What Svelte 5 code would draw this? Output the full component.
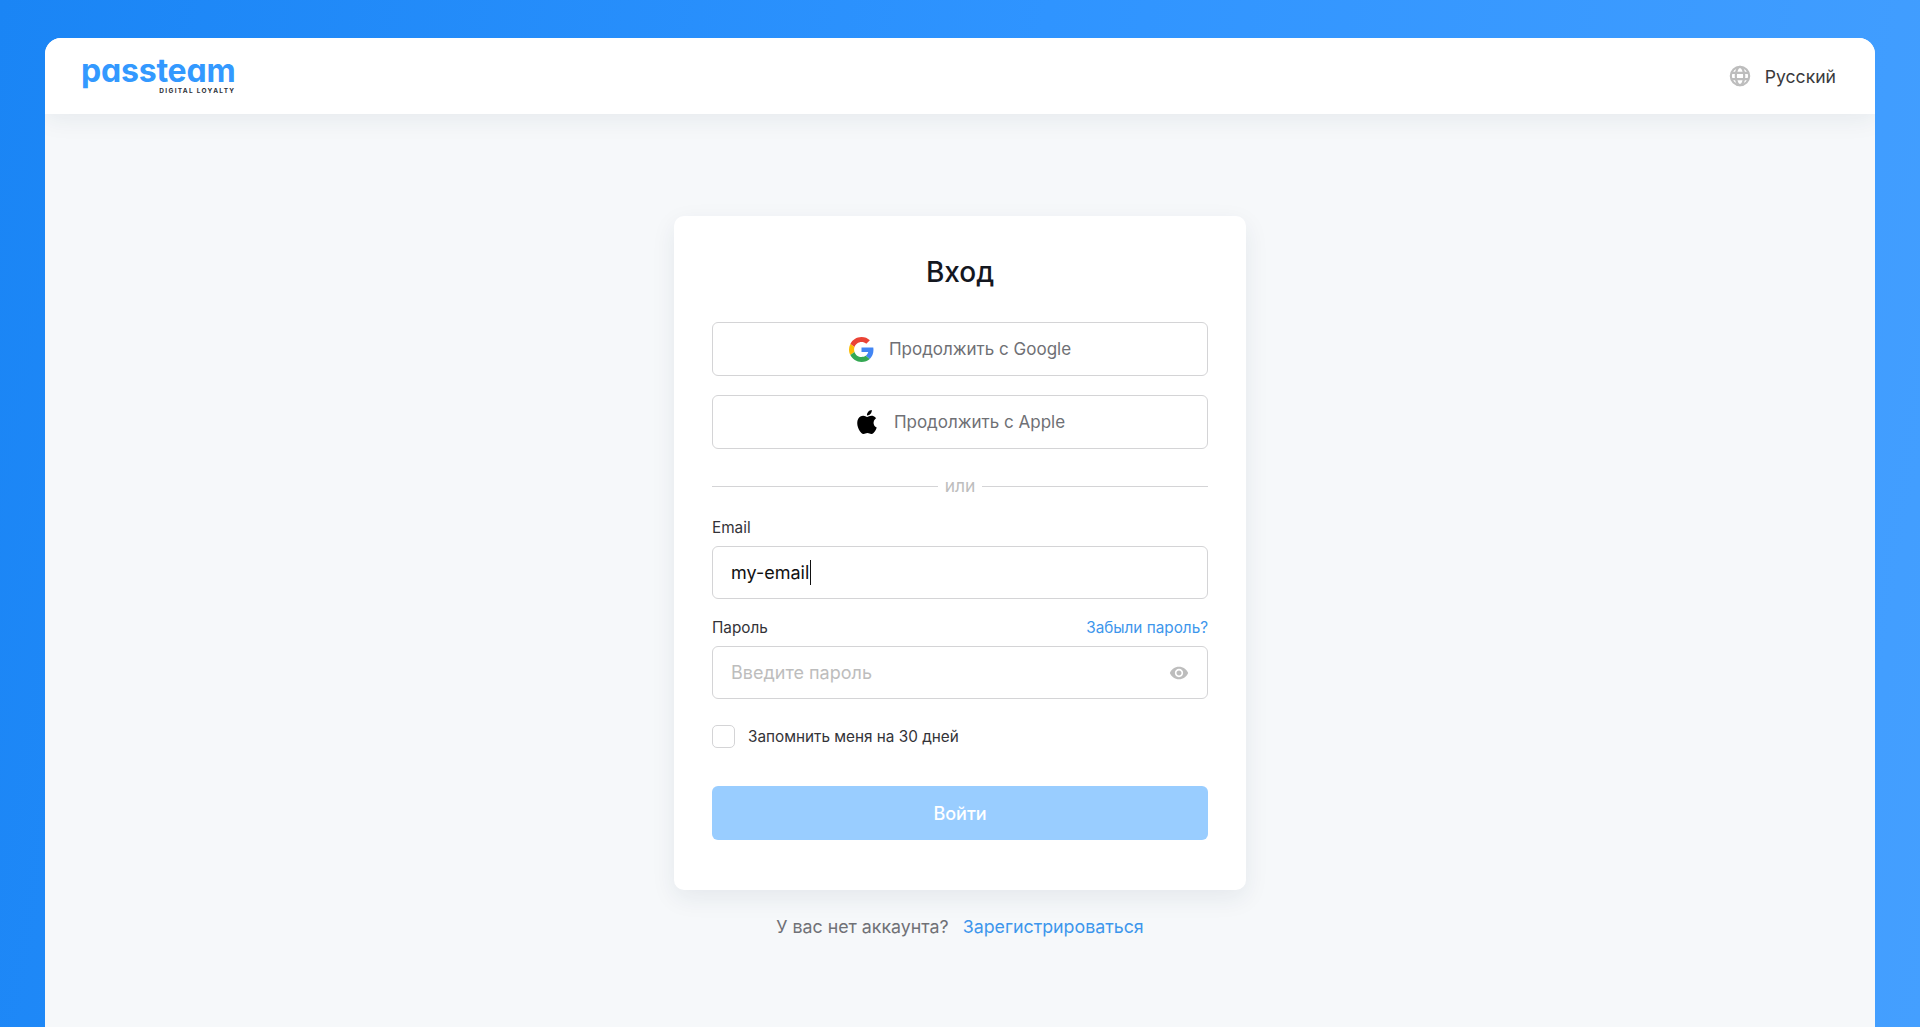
<script>
  let email = 'my-email';
</script>

<div class="shell">
  <header class="topbar">
    <div class="logo">
      <span class="logo-word">passteam</span>
      <span class="logo-tag">DIGITAL LOYALTY</span>
    </div>
    <div class="lang">
      <svg class="globe" viewBox="0 0 24 24" fill="none" stroke="#bdbdbd" stroke-width="2.4">
        <circle cx="12" cy="12" r="10" />
        <ellipse cx="12" cy="12" rx="4.6" ry="10" />
        <path d="M2.6 8.6h18.8M2.6 15.4h18.8" />
      </svg>
      <span>Русский</span>
    </div>
  </header>

  <main class="page">
    <section class="card">
      <h1>Вход</h1>

      <button class="oauth" type="button">
        <svg class="g-icon" viewBox="0 0 48 48">
          <path fill="#EA4335" d="M24 9.5c3.54 0 6.71 1.22 9.21 3.6l6.85-6.85C35.9 2.38 30.47 0 24 0 14.62 0 6.51 5.38 2.56 13.22l7.98 6.19C12.43 13.72 17.74 9.5 24 9.5z" />
          <path fill="#4285F4" d="M46.98 24.55c0-1.57-.15-3.09-.38-4.55H24v9.02h12.94c-.58 2.96-2.26 5.48-4.78 7.18l7.73 6c4.51-4.18 7.09-10.36 7.09-17.65z" />
          <path fill="#FBBC05" d="M10.53 28.59c-.48-1.45-.76-2.99-.76-4.59s.27-3.14.76-4.59l-7.98-6.19C.92 16.46 0 20.12 0 24c0 3.88.92 7.54 2.56 10.78l7.97-6.19z" />
          <path fill="#34A853" d="M24 48c6.48 0 11.93-2.13 15.89-5.81l-7.73-6c-2.15 1.45-4.92 2.3-8.16 2.3-6.26 0-11.57-4.22-13.47-9.91l-7.98 6.19C6.51 42.62 14.62 48 24 48z" />
        </svg>
        <span>Продолжить с Google</span>
      </button>

      <button class="oauth" type="button">
        <svg class="apple-icon" viewBox="0 0 24 24">
          <path fill="#000" d="M12.152 6.896c-.948 0-2.415-1.078-3.96-1.04-2.04.027-3.91 1.183-4.961 3.014-2.117 3.675-.546 9.103 1.519 12.09 1.013 1.454 2.208 3.09 3.792 3.039 1.52-.065 2.09-.987 3.935-.987 1.831 0 2.35.987 3.96.948 1.637-.026 2.676-1.48 3.676-2.948 1.156-1.688 1.636-3.325 1.662-3.415-.039-.013-3.182-1.221-3.22-4.857-.026-3.04 2.48-4.494 2.597-4.559-1.429-2.09-3.623-2.324-4.39-2.376-2-.156-3.675 1.09-4.61 1.09zM15.53 3.83c.843-1.012 1.4-2.427 1.245-3.83-1.207.052-2.662.805-3.532 1.818-.78.896-1.454 2.338-1.273 3.714 1.338.104 2.715-.688 3.559-1.701" />
        </svg>
        <span>Продолжить с Apple</span>
      </button>

      <div class="divider"><span>или</span></div>

      <div class="field first">
        <div class="field-head"><label for="email">Email</label></div>
        <div class="input-box">
          <span class="typed" id="email">{email}</span>
        </div>
      </div>

      <div class="field">
        <div class="field-head">
          <label for="password">Пароль</label>
          <a href="#forgot" class="link small">Забыли пароль?</a>
        </div>
        <div class="input-box">
          <input id="password" type="password" placeholder="Введите пароль" />
          <svg class="eye" viewBox="0 0 24 24">
            <path fill="#bdbdbd" d="M12 4.5C7 4.5 2.73 7.61 1 12c1.73 4.39 6 7.5 11 7.5s9.27-3.11 11-7.5c-1.73-4.39-6-7.5-11-7.5zM12 17c-2.76 0-5-2.24-5-5s2.24-5 5-5 5 2.24 5 5-2.24 5-5 5zm0-8c-1.66 0-3 1.34-3 3s1.34 3 3 3 3-1.34 3-3-1.34-3-3-3z" />
          </svg>
        </div>
      </div>

      <label class="remember">
        <span class="check"></span>
        <span>Запомнить меня на 30 дней</span>
      </label>

      <button class="submit" type="button">Войти</button>
    </section>

    <p class="signup">
      <span>У вас нет аккаунта?</span>
      <a href="#signup" class="link">Зарегистрироваться</a>
    </p>
  </main>
</div>

<style>
  :global(body) {
    margin: 0;
    height: 1027px;
    overflow: hidden;
    background: linear-gradient(100deg, #1a85f5 0%, #2f94ff 50%, #449fff 100%);
    font-family: Inter, "Noto Sans", sans-serif;
  }

  .shell {
    margin: 38px 45px 0;
    height: 989px;
    border-radius: 16px 16px 0 0;
    overflow: hidden;
    display: flex;
    flex-direction: column;
    background: #f6f8fa;
  }

  .topbar {
    flex: none;
    height: 76px;
    padding: 0 39px 0 36px;
    display: flex;
    align-items: center;
    justify-content: space-between;
    background: #fff;
    box-shadow: 0 4px 24px rgba(30, 50, 80, 0.08);
    position: relative;
  }

  .logo {
    display: flex;
    flex-direction: column;
    align-items: flex-end;
  }

  .logo-word {
    font-family: Inter, sans-serif;
    font-feature-settings: 'cv11';
    font-size: 32px;
    font-weight: 700;
    line-height: 26px;
    letter-spacing: -0.2px;
    color: #3399ff;
  }

  .logo-tag {
    font-family: Inter, sans-serif;
    font-size: 6.5px;
    font-weight: 700;
    line-height: 8px;
    letter-spacing: 1.3px;
    color: #2e3138;
    margin-top: 3px;
  }

  .lang {
    display: flex;
    align-items: center;
    gap: 14px;
    font-size: 17.6px;
    color: #3a3a3c;
  }

  .globe {
    width: 22px;
    height: 22px;
  }

  .page {
    flex: 1;
    display: flex;
    flex-direction: column;
    align-items: center;
    padding-top: 102px;
  }

  .card {
    box-sizing: border-box;
    width: 572px;
    height: 674px;
    padding: 38px;
    background: #fff;
    border-radius: 10px;
    box-shadow: 0 8px 24px rgba(30, 50, 80, 0.08);
    display: flex;
    flex-direction: column;
  }

  h1 {
    margin: 0 0 33px;
    height: 35px;
    font-size: 28px;
    line-height: 37px;
    font-weight: 500;
    text-align: center;
    color: #14171f;
  }

  .oauth {
    flex: none;
    height: 54px;
    margin-bottom: 19px;
    display: flex;
    align-items: center;
    justify-content: center;
    gap: 15px;
    background: #fff;
    border: 1px solid #d4d4d6;
    border-radius: 6px;
    font-family: inherit;
    font-size: 17px;
    font-weight: 400;
    color: #6f7075;
  }

  .g-icon {
    width: 25px;
    height: 25px;
  }

  .apple-icon {
    width: 24px;
    height: 24px;
  }

  .divider {
    height: 22px;
    margin: 7px 0 21px;
    display: flex;
    align-items: center;
    gap: 7px;
    font-size: 17.5px;
    color: #bdbdbd;
  }

  .divider span {
    padding-bottom: 2px;
  }

  .divider::before,
  .divider::after {
    content: '';
    flex: 1;
    height: 1px;
    background: #d4d4d6;
  }

  .field {
    display: flex;
    flex-direction: column;
  }

  .field.first {
    margin-bottom: 19px;
  }

  .field-head {
    display: flex;
    justify-content: space-between;
    align-items: center;
    height: 18px;
    margin-bottom: 10px;
    font-size: 15.3px;
    color: #333338;
  }

  .input-box {
    box-sizing: border-box;
    height: 53px;
    padding: 0 19px 0 18px;
    display: flex;
    align-items: center;
    border: 1px solid #d4d4d6;
    border-radius: 6px;
    background: #fff;
  }

  .typed {
    font-size: 18px;
    color: #111;
    padding-right: 1px;
    border-right: 1px solid #111;
    line-height: 25px;
  }

  input {
    flex: 1;
    min-width: 0;
    padding: 0;
    border: 0;
    outline: 0;
    background: none;
    font-family: inherit;
    font-size: 18px;
    color: #111;
  }

  input::placeholder {
    color: #bdbdbd;
    opacity: 1;
  }

  .eye {
    width: 20px;
    height: 20px;
    margin-right: -1px;
  }

  .link {
    color: #3d96ec;
    text-decoration: none;
  }

  .small {
    font-size: 15.3px;
  }

  .remember {
    display: flex;
    align-items: center;
    gap: 13px;
    margin-top: 26px;
    height: 23px;
    font-size: 15.3px;
    color: #333338;
  }

  .check {
    box-sizing: border-box;
    width: 23px;
    height: 23px;
    border: 1px solid #d4d4d6;
    border-radius: 5px;
    background: #fff;
  }

  .submit {
    flex: none;
    height: 54px;
    margin-top: 38px;
    border: 0;
    border-radius: 6px;
    background: #99cdff;
    font-family: inherit;
    font-size: 18px;
    font-weight: 500;
    color: #fff;
  }

  .signup {
    margin: 25px 0 0;
    display: flex;
    gap: 14px;
    font-size: 17.8px;
    line-height: 24px;
    color: #707176;
  }
</style>
